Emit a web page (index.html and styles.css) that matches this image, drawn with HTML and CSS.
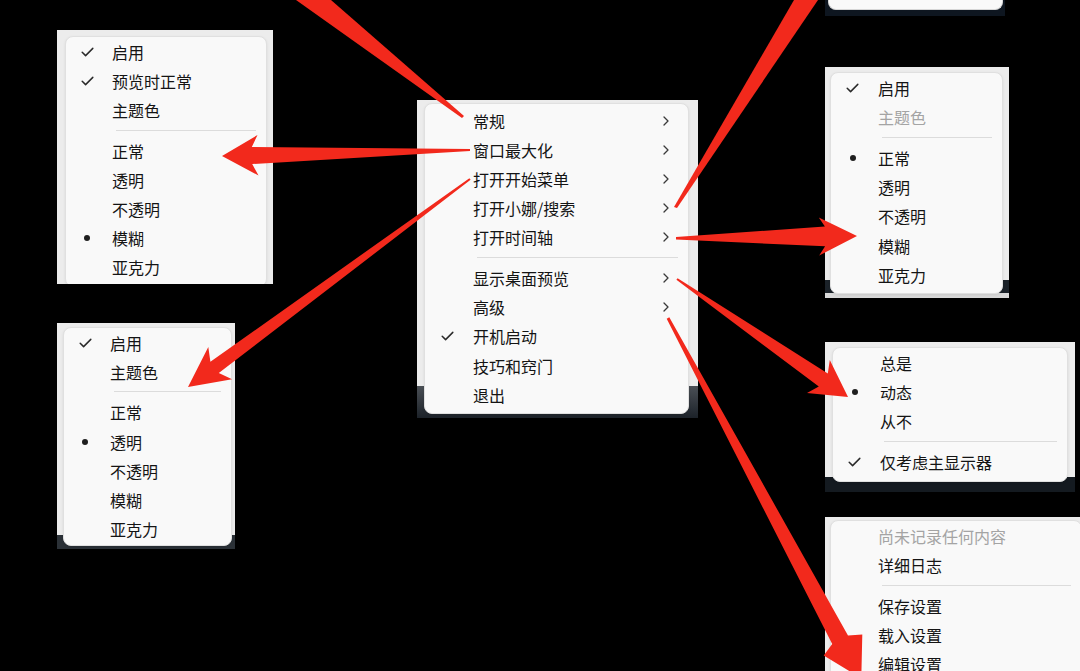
FILE: index.html
```html
<!DOCTYPE html>
<html lang="zh-CN">
<head>
<meta charset="utf-8">
<title>菜单设置</title>
<link rel="stylesheet" href="styles.css">
</head>
<body>
<svg class="defs" width="0" height="0" aria-hidden="true">
  <defs>
    <symbol id="chev" viewBox="0 0 6 10"><polyline points="1,1 5,5 1,9" fill="none" stroke="#3a3a3a" stroke-width="1.3" stroke-linecap="round" stroke-linejoin="round"/></symbol>
    <symbol id="check" viewBox="0 0 13 10"><polyline points="1.2,5.2 4.6,8.6 11.8,1.4" fill="none" stroke="#2a2a2a" stroke-width="1.5" stroke-linecap="round" stroke-linejoin="round"/></symbol>
  </defs>
</svg>
<div class="canvas">

  <section class="shot shot-main">
    <div class="menu">
      <div class="item"><span class="ic"></span><span class="tx">常规</span><span class="sub"><svg class="chev"><use href="#chev"/></svg></span></div>
      <div class="item"><span class="ic"></span><span class="tx">窗口最大化</span><span class="sub"><svg class="chev"><use href="#chev"/></svg></span></div>
      <div class="item"><span class="ic"></span><span class="tx">打开开始菜单</span><span class="sub"><svg class="chev"><use href="#chev"/></svg></span></div>
      <div class="item"><span class="ic"></span><span class="tx">打开小娜/搜索</span><span class="sub"><svg class="chev"><use href="#chev"/></svg></span></div>
      <div class="item"><span class="ic"></span><span class="tx">打开时间轴</span><span class="sub"><svg class="chev"><use href="#chev"/></svg></span></div>
      <div class="sep"></div>
      <div class="item"><span class="ic"></span><span class="tx">显示桌面预览</span><span class="sub"><svg class="chev"><use href="#chev"/></svg></span></div>
      <div class="item"><span class="ic"></span><span class="tx">高级</span><span class="sub"><svg class="chev"><use href="#chev"/></svg></span></div>
      <div class="item"><span class="ic"><svg class="check"><use href="#check"/></svg></span><span class="tx">开机启动</span><span class="sub"></span></div>
      <div class="item"><span class="ic"></span><span class="tx">技巧和窍门</span><span class="sub"></span></div>
      <div class="item"><span class="ic"></span><span class="tx">退出</span><span class="sub"></span></div>
    </div>
  </section>

  <section class="shot shot-lt">
    <div class="menu">
      <div class="item"><span class="ic"><svg class="check"><use href="#check"/></svg></span><span class="tx">启用</span></div>
      <div class="item"><span class="ic"><svg class="check"><use href="#check"/></svg></span><span class="tx">预览时正常</span></div>
      <div class="item"><span class="ic"></span><span class="tx">主题色</span></div>
      <div class="sep"></div>
      <div class="item"><span class="ic"></span><span class="tx">正常</span></div>
      <div class="item"><span class="ic"></span><span class="tx">透明</span></div>
      <div class="item"><span class="ic"></span><span class="tx">不透明</span></div>
      <div class="item"><span class="ic"><span class="dot"></span></span><span class="tx">模糊</span></div>
      <div class="item"><span class="ic"></span><span class="tx">亚克力</span></div>
    </div>
  </section>

  <section class="shot shot-lb">
    <div class="menu">
      <div class="item"><span class="ic"><svg class="check"><use href="#check"/></svg></span><span class="tx">启用</span></div>
      <div class="item"><span class="ic"></span><span class="tx">主题色</span></div>
      <div class="sep"></div>
      <div class="item"><span class="ic"></span><span class="tx">正常</span></div>
      <div class="item"><span class="ic"><span class="dot"></span></span><span class="tx">透明</span></div>
      <div class="item"><span class="ic"></span><span class="tx">不透明</span></div>
      <div class="item"><span class="ic"></span><span class="tx">模糊</span></div>
      <div class="item"><span class="ic"></span><span class="tx">亚克力</span></div>
    </div>
  </section>

  <section class="shot shot-rt">
    <div class="menu-stub"></div>
  </section>

  <section class="shot shot-r2">
    <div class="menu">
      <div class="item"><span class="ic"><svg class="check"><use href="#check"/></svg></span><span class="tx">启用</span></div>
      <div class="item disabled"><span class="ic"></span><span class="tx">主题色</span></div>
      <div class="sep"></div>
      <div class="item"><span class="ic"><span class="dot"></span></span><span class="tx">正常</span></div>
      <div class="item"><span class="ic"></span><span class="tx">透明</span></div>
      <div class="item"><span class="ic"></span><span class="tx">不透明</span></div>
      <div class="item"><span class="ic"></span><span class="tx">模糊</span></div>
      <div class="item"><span class="ic"></span><span class="tx">亚克力</span></div>
    </div>
  </section>

  <section class="shot shot-r3">
    <div class="menu">
      <div class="item"><span class="ic"></span><span class="tx">总是</span></div>
      <div class="item"><span class="ic"><span class="dot"></span></span><span class="tx">动态</span></div>
      <div class="item"><span class="ic"></span><span class="tx">从不</span></div>
      <div class="sep"></div>
      <div class="item"><span class="ic"><svg class="check"><use href="#check"/></svg></span><span class="tx">仅考虑主显示器</span></div>
    </div>
  </section>

  <section class="shot shot-r4">
    <div class="menu">
      <div class="item disabled"><span class="ic"></span><span class="tx">尚未记录任何内容</span></div>
      <div class="item"><span class="ic"></span><span class="tx">详细日志</span></div>
      <div class="sep"></div>
      <div class="item"><span class="ic"></span><span class="tx">保存设置</span></div>
      <div class="item"><span class="ic"></span><span class="tx">载入设置</span></div>
      <div class="item"><span class="ic"></span><span class="tx">编辑设置</span></div>
    </div>
  </section>

  <svg class="arrows" viewBox="0 0 1080 671" width="1080" height="671" aria-hidden="true">
    <g fill="#f2291c">
      <polygon points="296,0 331,0 464,116 462,118"/>
      <polygon points="222,156 257.5,135 251.8,147 470,149 470,151 252.2,164 258.5,175.5"/>
      <polygon points="188,387 208.3,347.1 210.4,361.8 469.4,178.2 470.6,179.8 218.8,373 232.1,379.3"/>
      <polygon points="794,0 818,0 677,208 674,207"/>
      <polygon points="857,236 818.8,217.4 824.9,226.4 676,237 676,239.5 825.1,246.3 819.2,255.4"/>
      <polygon points="848,397 829.8,360.1 827.8,373.4 677.6,278.2 676.4,279.8 818.8,386.6 807,393.1"/>
      <polygon points="861.3,678.3 862.3,634.4 848,635.4 669.3,317.3 666.7,318.7 832.2,644 823.7,655.6"/>
    </g>
  </svg>
</div>
</body>
</html>
```

FILE: styles.css
```css
* {
  box-sizing: border-box;
}

html,
body {
  margin: 0;
  padding: 0;
  background: #000;
}

body {
  width: 1080px;
  height: 671px;
  overflow: hidden;
  font-family: "Noto Sans CJK SC", "Noto Sans", sans-serif;
}

.defs {
  position: absolute;
  width: 0;
  height: 0;
}

.canvas {
  position: relative;
  width: 1080px;
  height: 671px;
  background: #000;
  overflow: hidden;
}

/* each cropped screenshot sits at its own place on the black canvas */
.shot {
  position: absolute;
  overflow: hidden;
  background: #ececec;
}

.shot-main {
  left: 417px;
  top: 100px;
  width: 281px;
  height: 318px;
  padding: 3px 0 0 7px;
  background: linear-gradient(to bottom, #ececec 0, #ececec 90%, #4a4f55 90%, #1c2229 100%);
}

.shot-lt {
  left: 57px;
  top: 30px;
  width: 216px;
  height: 254px;
  padding: 6px 0 0 8px;
}

.shot-lb {
  left: 57px;
  top: 323px;
  width: 178px;
  height: 226px;
  padding: 4px 0 0 6px;
  background: linear-gradient(to bottom, #ececec 0, #ececec 94%, #2b3137 94%);
}

.shot-rt {
  left: 825px;
  top: 0;
  width: 180px;
  height: 16px;
  padding: 0 0 0 3px;
  background: #0e1620;
}

.shot-r2 {
  left: 825px;
  top: 67px;
  width: 184px;
  height: 231px;
  padding: 5px 0 0 5px;
  background: linear-gradient(to bottom, #ececec 0, #ececec 92%, #1b2229 92%, #1b2229 98%, #d9d9d9 98%);
}

.shot-r3 {
  left: 825px;
  top: 342px;
  width: 250px;
  height: 150px;
  padding: 5px 0 0 7px;
  background: linear-gradient(to bottom, #ececec 0, #ececec 90%, #141a20 90%);
}

.shot-r4 {
  left: 825px;
  top: 517px;
  width: 255px;
  height: 154px;
  padding: 3px 0 0 5px;
}

.menu-stub {
  width: 175px;
  height: 10px;
  background: #f9f9f9;
  border-radius: 0 0 8px 8px;
  border: 1px solid #d6d6d6;
  border-top: 0;
}

/* menu panel */
.menu {
  --tx: 47px;
  display: flex;
  flex-direction: column;
  background: #f9f9f9;
  border: 1px solid #e0e0e0;
  border-radius: 8px;
  box-shadow: 0 1px 3px rgba(0, 0, 0, 0.08);
}

.shot-main .menu {
  --tx: 48px;
  width: 265px;
  padding: 2px 0 4px;
}

.shot-lt .menu {
  --tx: 46px;
  width: 202px;
  padding: 0 0 4px;
}

.shot-lb .menu {
  --tx: 46px;
  width: 169px;
  padding: 0 0 1px;
}

.shot-r2 .menu {
  width: 173px;
  padding: 0.5px 0 4px;
}

.shot-r3 .menu {
  width: 236px;
  padding: 0.5px 0 4px;
}

.shot-r4 .menu {
  width: 252px;
  padding: 0.5px 0 3px;
}

.item {
  display: grid;
  grid-template-columns: var(--tx) 1fr 44px;
  align-items: center;
  height: 29.2px;
  font-size: 16px;
  line-height: 1;
  color: #141414;
  white-space: nowrap;
}

.item.disabled {
  color: #a4a4a4;
}

.ic {
  display: flex;
  align-items: center;
  justify-content: center;
  padding-right: 4px;
  height: 100%;
}

.sub {
  display: flex;
  align-items: center;
  justify-content: center;
  height: 100%;
}

.chev {
  width: 6px;
  height: 10px;
}

.check {
  width: 13px;
  height: 10px;
}

.dot {
  width: 6px;
  height: 6px;
  border-radius: 50%;
  background: #1f1f1f;
}

.sep {
  height: 1px;
  background: #dcdcdc;
  margin: 5px 10px 5.5px calc(var(--tx) + 4px);
}

.arrows {
  position: absolute;
  left: 0;
  top: 0;
  pointer-events: none;
}
```
